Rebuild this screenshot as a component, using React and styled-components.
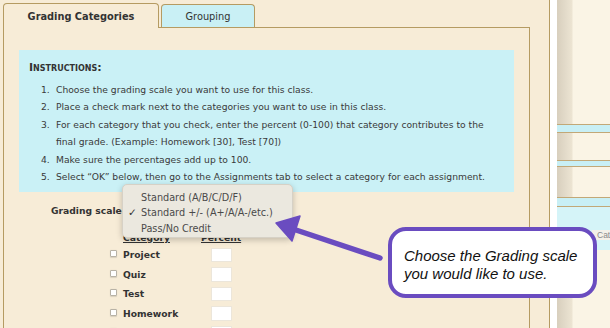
import React from 'react';
import styled, { createGlobalStyle } from 'styled-components';

const GlobalStyle = createGlobalStyle`
  html, body {
    margin: 0;
    padding: 0;
  }
  body {
    width: 610px;
    height: 328px;
    overflow: hidden;
    background: #f7ecd7;
    font-family: "DejaVu Sans", Verdana, sans-serif;
  }
`;

const Page = styled.div`
  position: relative;
  display: flex;
  width: 610px;
  height: 328px;
  overflow: hidden;
`;

// Left side: tabs + panel
const Main = styled.div`
  flex: none;
  width: 550px;
  box-sizing: border-box;
  padding: 3px 0 0 3px;
  border-right: 1px solid #b59b62;
  background: #f7ecd7;
  display: flex;
  flex-direction: column;
`;

const TabRow = styled.div`
  display: flex;
  align-items: flex-end;
  gap: 2px;
  height: 24px;
  flex: none;
`;

const Tab = styled.div`
  box-sizing: border-box;
  width: ${({ $w }) => $w}px;
  height: ${({ $active }) => ($active ? 25 : 23)}px;
  margin-bottom: ${({ $active }) => ($active ? -1 : 0)}px;
  position: relative;
  z-index: ${({ $active }) => ($active ? 1 : 0)};
  border: 1px solid #b59b62;
  border-bottom: none;
  border-radius: 4px 4px 0 0;
  background: ${({ $active }) => ($active ? '#f7ecd7' : '#c9f0f5')};
  color: #333;
  font-size: 9.8px;
  font-weight: ${({ $active }) => ($active ? 700 : 400)};
  display: flex;
  align-items: center;
  justify-content: center;
`;

const Panel = styled.div`
  flex: 1;
  width: 527px;
  box-sizing: border-box;
  border: 1px solid #b59b62;
  border-bottom: none;
  padding: 22px 15px 0;
`;

const InstructionBox = styled.div`
  background: #caf1f6;
  padding: 9px 14px 6.5px 10px;
  color: #3a3a3a;
  font-size: 9.2px;
`;

const InstructionTitle = styled.div`
  font-size: 11px;
  font-weight: 700;
  font-variant: small-caps;
  line-height: 17px;
  color: #333;
`;

const Steps = styled.ol`
  list-style: none;
  margin: 4.5px 0 0;
  padding: 0 0 0 12px;
`;

const Step = styled.li`
  display: grid;
  grid-template-columns: 15px 1fr;
  line-height: 17.5px;
`;

const GradeRow = styled.div`
  margin-top: 9.5px;
  padding-left: 32px;
  font-size: 9.2px;
  font-weight: 700;
  line-height: 17px;
  color: #333;
`;

const CategoryTable = styled.div`
  display: grid;
  grid-template-columns: 13px 78px 40px;
  grid-template-rows: 15.5px;
  grid-auto-rows: 19.5px;
  align-items: center;
  margin: 11px 0 0 91px;
  font-size: 9.2px;
  font-weight: 700;
  color: #333;
`;

const HeadCell = styled.span`
  text-decoration: underline;
  text-align: ${({ $center }) => ($center ? 'center' : 'left')};
`;

const Check = styled.span`
  display: block;
  width: 7px;
  height: 7px;
  margin-top: -2px;
  box-sizing: border-box;
  border: 1px solid ${({ $disabled }) => ($disabled ? '#c9c4ba' : '#b8b2a6')};
  border-radius: 1px;
  background: ${({ $disabled }) => ($disabled ? '#dedad2' : '#fff')};
  box-shadow: 0 0.5px 1px rgba(0, 0, 0, 0.12);
`;

const PercentInput = styled.span`
  display: block;
  justify-self: center;
  width: 21px;
  height: 14.5px;
  box-sizing: border-box;
  border: 1px solid #ece6da;
  background: #fff;
`;

// Open select menu
const Menu = styled.div`
  position: absolute;
  left: 122px;
  top: 184px;
  width: 171px;
  height: 54px;
  box-sizing: border-box;
  padding: 4.5px 0;
  background: #ebe8df;
  border: 1px solid #d6d1c6;
  border-radius: 5px;
  box-shadow: 0 2px 6px rgba(0, 0, 0, 0.22);
  color: #4a4a4a;
  font-size: 9.7px;
  z-index: 3;
`;

const MenuItem = styled.div`
  display: grid;
  grid-template-columns: 18px 1fr;
  line-height: 15.5px;
`;

const MenuCheck = styled.span`
  padding-left: 5px;
  font-size: 10.5px;
  color: #333;
`;

// Right side strip
const Gap = styled.div`
  flex: none;
  width: 7px;
  background: #fff;
`;

const Side = styled.div`
  flex: 1;
  display: flex;
  flex-direction: column;
  background: linear-gradient(to right, #d8cfbd 0, #e2dac9 8px, #ece4d2 15px, #faf4e5 16px);
`;

const Space = styled.div`
  flex: none;
  height: ${({ $h }) => $h}px;
`;

const Stripe = styled.div`
  flex: none;
  height: ${({ $h }) => $h}px;
  border-top: 1px solid #c2a877;
  border-bottom: 1px solid #c2a877;
  background: #c8eff5;
`;

const Band = styled.div`
  flex: none;
  height: ${({ $h }) => $h}px;
  background: #d5f4f8;
`;

const SideHeadRow = styled.div`
  flex: none;
  height: 10px;
  display: flex;
  background: #d5f4f8;
  padding-left: 35px;
`;

const SideHeadCell = styled.div`
  flex: 1;
  overflow: hidden;
  white-space: nowrap;
  background: #f4f1ea;
  color: #8a8a8a;
  font-family: "Liberation Sans", Arial, sans-serif;
  font-size: 8.5px;
  line-height: 10px;
  padding-left: 5px;
`;

// Annotation overlay
const ArrowLayer = styled.svg`
  position: absolute;
  left: 0;
  top: 0;
  width: 610px;
  height: 328px;
  pointer-events: none;
  z-index: 4;
`;

const Bubble = styled.div`
  position: absolute;
  left: 388px;
  top: 227px;
  width: 209px;
  height: 71px;
  box-sizing: border-box;
  border: 4px solid #6a4cc0;
  border-radius: 18px;
  background: #fff;
  padding: 16px 0 0 12px;
  font-family: "Liberation Sans", Arial, sans-serif;
  font-style: italic;
  font-size: 15px;
  line-height: 17.5px;
  color: #111;
  z-index: 5;
`;

const steps = [
  'Choose the grading scale you want to use for this class.',
  'Place a check mark next to the categories you want to use in this class.',
  'For each category that you check, enter the percent (0-100) that category contributes to the final grade. (Example: Homework [30], Test [70])',
  'Make sure the percentages add up to 100.',
  'Select \u201COK\u201D below, then go to the Assignments tab to select a category for each assignment.',
];

const categories = ['Project', 'Quiz', 'Test', 'Homework'];

const scales = [
  { label: 'Standard (A/B/C/D/F)' },
  { label: 'Standard +/- (A+/A/A-/etc.)', checked: true },
  { label: 'Pass/No Credit' },
];

const App = () => (
  <>
    <GlobalStyle />
    <Page>
      <Main>
        <TabRow>
          <Tab $active $w={156}>Grading Categories</Tab>
          <Tab $w={94}>Grouping</Tab>
        </TabRow>
        <Panel>
          <InstructionBox>
            <InstructionTitle>Instructions:</InstructionTitle>
            <Steps>
              {steps.map((text, i) => (
                <Step key={i}>
                  <span>{i + 1}.</span>
                  <span>{text}</span>
                </Step>
              ))}
            </Steps>
          </InstructionBox>

          <GradeRow>Grading scale</GradeRow>

          <CategoryTable>
            <span />
            <HeadCell>Category</HeadCell>
            <HeadCell $center>Percent</HeadCell>
            {categories.map((name) => (
              <React.Fragment key={name}>
                <Check />
                <span>{name}</span>
                <PercentInput />
              </React.Fragment>
            ))}
            <Check $disabled />
            <span />
            <PercentInput />
          </CategoryTable>
        </Panel>
      </Main>
      <Gap />
      <Side>
        <Space $h={124} />
        <Stripe $h={7} />
        <Space $h={27} />
        <Stripe $h={5} />
        <Space $h={30} />
        <Stripe $h={8} />
        <Band $h={23} />
        <SideHeadRow>
          <SideHeadCell>Category</SideHeadCell>
        </SideHeadRow>
        <Band $h={10} />
      </Side>

      <Menu>
        {scales.map((s) => (
          <MenuItem key={s.label}>
            <MenuCheck>{s.checked ? '\u2713' : ''}</MenuCheck>
            <span>{s.label}</span>
          </MenuItem>
        ))}
      </Menu>

      <ArrowLayer viewBox="0 0 610 328">
        <line x1="293" y1="229" x2="380" y2="258" stroke="#6a4cc0" strokeWidth="5.5" strokeLinecap="round" />
        <polygon points="276,223 300,216 292,241" fill="#6a4cc0" strokeLinejoin="round" stroke="#6a4cc0" strokeWidth="1.5" />
      </ArrowLayer>

      <Bubble>
        Choose the Grading scale
        <br />
        you would like to use.
      </Bubble>
    </Page>
  </>
);

export default App;
